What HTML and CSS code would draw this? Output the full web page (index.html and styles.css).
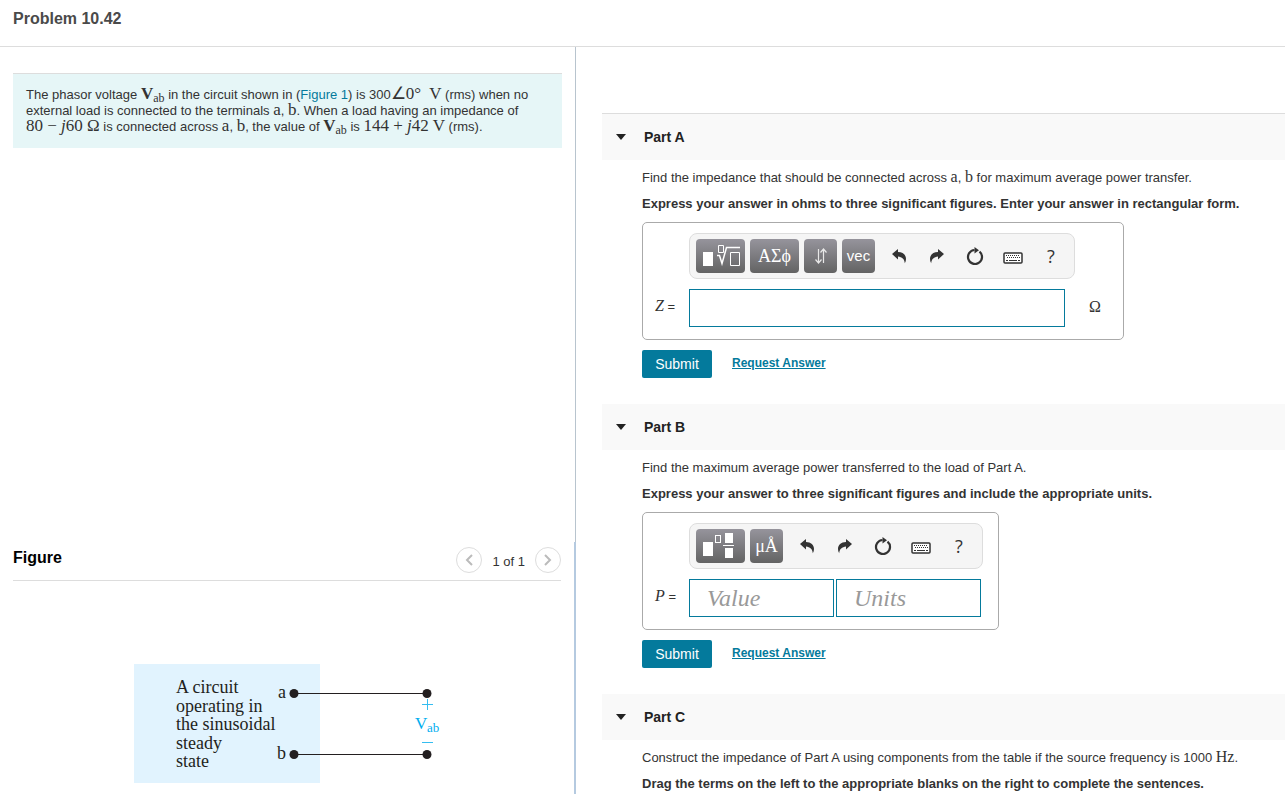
FILE: index.html
```html
<!DOCTYPE html>
<html lang="en">
<head>
    <meta charset="UTF-8">
    <meta name="viewport" content="width=device-width, initial-scale=1.0">
    <title>Problem 10.42</title>
    <link rel="stylesheet" href="styles.css">
</head>
<body>
    <!-- Shared toolbar icons -->
    <svg class="sprite" aria-hidden="true">
        <symbol id="icon-undo" viewBox="0 0 16 16">
            <path d="M1 6 7 1v3c5 0 8 3 8 7 0 1.5-.4 3-1.2 4.200C13.5 11 11 9 7 8.500V11.500z" fill="#333"/>
        </symbol>
        <symbol id="icon-redo" viewBox="0 0 16 16">
            <path d="M15 6 9 1v3C4 4 1 7 1 11c0 1.500.4 3 1.200 4.200C2.500 11 5 9 9 8.500V11.500z" fill="#333"/>
        </symbol>
        <symbol id="icon-reset" viewBox="0 0 18 18">
            <path d="M13.500 4.600A7 7 0 1 1 8.500 3" fill="none" stroke="#333" stroke-width="2.200"/>
            <path d="M8.500 0l4.500 3.200-4.500 3.300z" fill="#333"/>
        </symbol>
        <symbol id="icon-keyboard" viewBox="0 0 20 12">
            <rect x="1" y="1" width="18" height="10" rx="1" fill="#fff" stroke="#333" stroke-width="1.500"/>
            <path d="M3 3.500h14M4 5.500h13" stroke="#333" stroke-dasharray="1 1"/>
            <path d="M3 8.500h2M6 8.500h8M15 8.500h2" stroke="#333"/>
        </symbol>
    </svg>

    <header class="page-header">
        <h1>Problem 10.42</h1>
    </header>

    <main class="panes">
        <div class="left-pane">
            <section class="problem">
                <p class="intro">The phasor voltage <span class="math"><b>V</b><sub>ab</sub></span> in the circuit shown in (<a href="#figure">Figure 1</a>) is 300<span class="math">∠0°&nbsp; V</span> (rms) when no external load is connected to the terminals <span class="math">a</span>, <span class="math">b</span>. When a load having an impedance of <span class="math">80 − <i>j</i>60 Ω</span> is connected across <span class="math">a</span>, <span class="math">b</span>, the value of <span class="math"><b>V</b><sub>ab</sub></span> is <span class="math">144 + <i>j</i>42 V</span> (rms).</p>
            </section>

            <section class="figure" id="figure">
                <div class="figure-header">
                    <h2>Figure</h2>
                    <div class="pager">
                        <button type="button" aria-label="Previous figure">
                            <svg width="8" height="12" viewBox="0 0 8 12"><path d="M7 1 2 6l5 5" fill="none" stroke="#bbb" stroke-width="2"/></svg>
                        </button>
                        <span>1 of 1</span>
                        <button type="button" aria-label="Next figure">
                            <svg width="8" height="12" viewBox="0 0 8 12"><path d="M1 1l5 5-5 5" fill="none" stroke="#bbb" stroke-width="2"/></svg>
                        </button>
                    </div>
                </div>
                <svg class="circuit" width="306" height="120" viewBox="0 0 306 120">
                    <rect width="186" height="119" fill="#e1f3fe"/>
                    <g class="circuit-text">
                        <text x="42" y="29">A circuit</text>
                        <text x="42" y="48">operating in</text>
                        <text x="42" y="66">the sinusoidal</text>
                        <text x="42" y="85">steady</text>
                        <text x="42" y="103">state</text>
                        <text x="144" y="34">a</text>
                        <text x="143" y="95">b</text>
                    </g>
                    <path d="M161 29.500h132M161 90.500h132" stroke="#231f20"/>
                    <g fill="#231f20">
                        <circle cx="160" cy="29.500" r="4.500"/>
                        <circle cx="293" cy="29.500" r="4.500"/>
                        <circle cx="160" cy="90.500" r="4.500"/>
                        <circle cx="293" cy="90.500" r="4.500"/>
                    </g>
                    <path d="M288 40.500h11M293.500 35v11M288 78.500h11" stroke="#35bdf0"/>
                    <text class="volt" x="281" y="65">V</text>
                    <text class="volt-sub" x="293" y="68">ab</text>
                </svg>
            </section>
        </div>

        <div class="right-pane">
            <section class="part">
                <h2 class="part-header"><button type="button"><span class="caret"></span>Part A</button></h2>
                <div class="part-body">
                    <p>Find the impedance that should be connected across <span class="math">a</span>, <span class="math">b</span> for maximum average power transfer.</p>
                    <p class="instructions">Express your answer in ohms to three significant figures. Enter your answer in rectangular form.</p>
                    <div class="answer">
                        <div class="toolbar">
                            <button type="button" class="tool wide" aria-label="Templates">
                                <svg width="38" height="24" viewBox="0 0 38 24">
                                    <rect x="1" y="8" width="10" height="14" fill="#fff"/>
                                    <path d="M16.500 1.500h5v7h-5zM28.500 8.500h9v13h-9z" fill="none" stroke="#fff"/>
                                    <path d="M15 11.500h2.500l2.500 8L24.500 3.500H38" fill="none" stroke="#fff" stroke-width="1.500"/>
                                </svg>
                            </button>
                            <button type="button" class="tool wide greek">ΑΣϕ</button>
                            <button type="button" class="tool" aria-label="Sub and superscript">
                                <svg width="14" height="16" viewBox="0 0 14 16"><path d="M4.500 1v14M1.500 11.500l3 3.500 3-3.500M9.500 15V1M6.500 4.500l3-3.500 3 3.500" fill="none" stroke="#e8e8e8" stroke-width="1.200"/></svg>
                            </button>
                            <button type="button" class="tool">vec</button>
                            <div class="actions">
                                <button type="button" aria-label="Undo"><svg width="16" height="16"><use href="#icon-undo"/></svg></button>
                                <button type="button" aria-label="Redo"><svg width="16" height="16"><use href="#icon-redo"/></svg></button>
                                <button type="button" aria-label="Reset"><svg width="18" height="18"><use href="#icon-reset"/></svg></button>
                                <button type="button" class="keyboard" aria-label="Keyboard shortcuts"><svg width="20" height="12"><use href="#icon-keyboard"/></svg></button>
                                <button type="button">?</button>
                            </div>
                        </div>
                        <label for="answerZ"><i>Z</i> =</label>
                        <div class="fields"><input type="text" id="answerZ"></div>
                        <span class="unit">Ω</span>
                    </div>
                    <div class="submit-row">
                        <button type="button" class="submit">Submit</button>
                        <a href="#">Request Answer</a>
                    </div>
                </div>
            </section>

            <section class="part">
                <h2 class="part-header"><button type="button"><span class="caret"></span>Part B</button></h2>
                <div class="part-body">
                    <p>Find the maximum average power transferred to the load of Part A.</p>
                    <p class="instructions">Express your answer to three significant figures and include the appropriate units.</p>
                    <div class="answer">
                        <div class="toolbar">
                            <button type="button" class="tool wide" aria-label="Templates">
                                <svg width="38" height="28" viewBox="0 0 38 28">
                                    <rect x="1" y="10" width="10" height="14" fill="#fff"/>
                                    <rect x="13.500" y="3.500" width="5" height="7" fill="none" stroke="#fff"/>
                                    <path d="M23 1h8v10h-8zM21 13h11v1H21zM23 16h8v10h-8z" fill="#fff"/>
                                </svg>
                            </button>
                            <button type="button" class="tool greek">μÅ</button>
                            <div class="actions">
                                <button type="button" aria-label="Undo"><svg width="16" height="16"><use href="#icon-undo"/></svg></button>
                                <button type="button" aria-label="Redo"><svg width="16" height="16"><use href="#icon-redo"/></svg></button>
                                <button type="button" aria-label="Reset"><svg width="18" height="18"><use href="#icon-reset"/></svg></button>
                                <button type="button" class="keyboard" aria-label="Keyboard shortcuts"><svg width="20" height="12"><use href="#icon-keyboard"/></svg></button>
                                <button type="button">?</button>
                            </div>
                        </div>
                        <label for="answerP"><i>P</i> =</label>
                        <div class="fields">
                            <input type="text" id="answerP" placeholder="Value" size="6">
                            <input type="text" placeholder="Units" aria-label="Units" size="6">
                        </div>
                    </div>
                    <div class="submit-row">
                        <button type="button" class="submit">Submit</button>
                        <a href="#">Request Answer</a>
                    </div>
                </div>
            </section>

            <section class="part">
                <h2 class="part-header"><button type="button"><span class="caret"></span>Part C</button></h2>
                <div class="part-body">
                    <p>Construct the impedance of Part A using components from the table if the source frequency is 1000 <span class="math">Hz</span>.</p>
                    <p class="instructions">Drag the terms on the left to the appropriate blanks on the right to complete the sentences.</p>
                </div>
            </section>
        </div>
    </main>
</body>
</html>
```
FILE: styles.css
```css
* {
    box-sizing: border-box;
}
body {
    margin: 0;
    height: 100vh;
    display: flex;
    flex-direction: column;
    font-family: "Liberation Sans", Arial, sans-serif;
    font-size: 13px;
    line-height: 16px;
    color: #333;
    background-color: #fff;
}
h1, h2, p {
    margin: 0;
}
button {
    font: inherit;
    color: inherit;
    padding: 0;
    border: none;
    background: none;
    cursor: pointer;
}
a {
    color: #047a9c;
}
.sprite {
    display: none;
}
.page-header {
    padding: 9px 13px 17px;
    border-bottom: 1px solid #ddd;
}
.page-header h1 {
    font-size: 16px;
    line-height: 20px;
    color: #4a4a4a;
}
.panes {
    flex: 1;
    min-height: 0;
    display: grid;
    grid-template-columns: 576fr 709fr;
}
.left-pane {
    min-height: 0;
    display: grid;
    grid-template-rows: 495fr 252fr;
}
.right-pane {
    min-height: 0;
    overflow-y: auto;
    scrollbar-width: none;
    padding: 66px 0 0 26px;
}

/* Problem text */
.problem {
    padding: 26px 13px;
    border-right: 1px solid #b8c4ce;
}
.intro {
    padding: 13px;
    border-top: 1px solid #ddd;
    background-color: #e6f6f7;
}
.intro a {
    text-decoration: none;
}
.math {
    font-family: "Liberation Serif", "Times New Roman", serif;
    font-size: 16px;
    line-height: 1px;
    white-space: nowrap;
}
.intro .math {
    font-size: 17px;
}
.math sub {
    font-size: 12px;
    line-height: 1px;
    vertical-align: -3px;
}

/* Figure */
.figure {
    padding: 5px 13px 0;
    border-right: 2px solid #b5cae0;
}
.figure-header {
    display: flex;
    justify-content: space-between;
    align-items: center;
    padding-bottom: 7px;
    border-bottom: 1px solid #ddd;
}
.figure-header h2 {
    font-size: 16px;
    line-height: 20px;
    color: #000;
    padding-bottom: 4px;
}
.pager {
    display: flex;
    align-items: center;
    gap: 10px;
}
.pager span {
    padding-top: 3px;
}
.pager button {
    display: flex;
    align-items: center;
    justify-content: center;
    width: 26px;
    height: 26px;
    border: 1px solid #ddd;
    border-radius: 50%;
}
.circuit {
    display: block;
    margin: 83px auto 0;
}
.circuit-text {
    font-family: "Liberation Serif", "Times New Roman", serif;
    font-size: 18px;
    fill: #231f20;
}
.volt, .volt-sub {
    font-family: "Liberation Serif", "Times New Roman", serif;
    font-size: 17px;
    fill: #00aeef;
}
.volt-sub {
    font-size: 13px;
}

/* Parts */
.part {
    margin-bottom: 26px;
}
.part-header {
    padding: 15px 14px;
    background-color: #f9f9f9;
    font-size: 14px;
    line-height: 16px;
    color: #222;
}
.part:first-child .part-header {
    border-top: 1px solid #ddd;
}
.part-header button {
    display: flex;
    align-items: center;
    gap: 18px;
}
.caret {
    border: 5px solid transparent;
    border-top: 6px solid #222;
    border-bottom: none;
}
.part-body {
    display: flex;
    flex-direction: column;
    align-items: flex-start;
    gap: 10px;
    padding: 10px 10px 0 40px;
}
.instructions {
    font-weight: bold;
}
.answer {
    display: grid;
    grid-template-columns: 46px auto auto;
    align-items: center;
    row-gap: 10px;
    padding: 10px 15px 12px 0;
    border: 1px solid #aaa;
    border-radius: 5px;
}
.toolbar {
    grid-column: 2 / 4;
    justify-self: start;
    display: flex;
    align-items: center;
    gap: 5px;
    height: 46px;
    padding: 0 4px 0 6px;
    border: 1px solid #ddd;
    border-radius: 8px;
    background-color: #f5f5f5;
}
.tool {
    display: flex;
    align-items: center;
    justify-content: center;
    width: 33px;
    height: 34px;
    border-radius: 4px;
    background: linear-gradient(#96949c, #636363);
    color: #fff;
    font-size: 15px;
}
.tool.wide {
    width: 49px;
}
.tool.greek {
    font-family: "Liberation Serif", "Times New Roman", serif;
    font-size: 18px;
}
.actions {
    display: flex;
}
.actions button {
    display: flex;
    align-items: center;
    justify-content: center;
    width: 38px;
    height: 34px;
    font-family: "Open Sans", sans-serif;
    font-size: 18px;
}
.actions .keyboard {
    padding-top: 4px;
}
.answer label {
    padding: 0 0 3px 12px;
}
.answer label i, .unit {
    font-family: "Liberation Serif", "Times New Roman", serif;
    font-size: 16px;
}
.unit {
    padding: 0 7px 3px 24px;
}
.fields {
    display: flex;
    gap: 2px;
}
.fields input {
    width: 145px;
    height: 38px;
    padding: 0 17px;
    border: 1px solid #047a9c;
    font-family: "Liberation Serif", "Times New Roman", serif;
    font-size: 24px;
    color: #333;
}
.fields input:only-child {
    width: 376px;
}
.fields input::placeholder {
    font-style: italic;
    color: #999;
}
.submit-row {
    display: flex;
    align-items: center;
    gap: 20px;
}
.submit {
    width: 70px;
    height: 28px;
    border-radius: 2px;
    background-color: #047a9c;
    color: #fff;
    font-size: 14px;
}
.submit-row a {
    padding-bottom: 2px;
    font-size: 12px;
    font-weight: bold;
}
```
